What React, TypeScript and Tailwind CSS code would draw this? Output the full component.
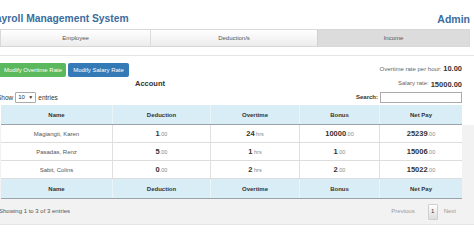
import React from "react";

const cols = "grid grid-cols-[112px_98px_89px_80px_82px]";

function Num({ v, unit }: { v: string; unit: string }) {
  return (
    <span className="text-[#333] leading-none">
      <span className="text-[7.5px] font-bold">{v}</span>
      <span className="text-[5.5px] text-[#888]">{unit}</span>
    </span>
  );
}

const rows = [
  { name: "Magiangit, Karen", d: "1", o: "24", b: "10000", n: "25239" },
  { name: "Pasadas, Renz", d: "5", o: "1", b: "1", n: "15006" },
  { name: "Sabit, Colins", d: "0", o: "2", b: "2", n: "15022" },
];

function HeaderRow() {
  const heads = ["Name", "Deduction", "Overtime", "Bonus", "Net Pay"];
  return (
    <div className={`${cols} h-[20px] bg-[#d9edf7] border-b border-[#9aa3a8]`}>
      {heads.map((h, i) => (
        <div
          key={h}
          className={`flex items-center justify-center text-[6px] leading-none font-bold text-[#333] ${i < 4 ? "border-r border-[#eaf4f9]" : ""}`}
        >
          {h}
        </div>
      ))}
    </div>
  );
}

const cell = "flex items-center justify-center text-[7.5px] leading-none";

export default function App() {
  return (
    <div className="w-[474px] h-[248px] bg-white overflow-hidden font-['Liberation_Sans',Arial,sans-serif]">
      {/* Title */}
      <div className="h-[29px] flex items-start justify-between pt-[13px] pr-[4px]">
        <div className="ml-[-11px] text-[10.3px] leading-[12px] font-bold text-[#3a6d9e]">
          Payroll Management System
        </div>
        <div className="text-[10.5px] leading-[12px] font-bold text-[#3a6d9e]">Admin</div>
      </div>

      {/* Tabs */}
      <div className="h-[18px] mr-[4px] flex border border-[#d8d8d8] bg-gradient-to-b from-white to-[#ececec] text-[6px] text-[#555]">
        <div className="w-[150px] flex items-center justify-center border-r border-[#dcdcdc]">Employee</div>
        <div className="w-[167px] flex items-center justify-center border-r border-[#d0d0d0]">Deduction/s</div>
        <div className="flex-1 flex items-center justify-center bg-[#dcdcdc]">Income</div>
      </div>

      {/* Panel */}
      <div className="mt-[8px] border-t border-[#e6e6e6]">
        {/* Row 1 */}
        <div className="h-[22px] pt-[7px] pr-[12px] flex items-start justify-between">
          <div className="flex gap-[2px]">
            <div className="h-[14px] w-[66px] flex items-center justify-center bg-[#5cb85c] text-white text-[6px] rounded-r-[2px]">
              Modify Overtime Rate
            </div>
            <div className="h-[14px] w-[61px] flex items-center justify-center bg-[#337ab7] text-white text-[6px] rounded-[2px]">
              Modify Salary Rate
            </div>
          </div>
          <div className="mt-[1px] text-[6px] leading-[10px] text-[#666]">
            Overtime rate per hour: <span className="text-[7.5px] font-bold text-[#333]">10.00</span>
          </div>
        </div>
        {/* Row 2 */}
        <div className="h-[12px] pr-[12px] flex items-center">
          <div className="w-[400px] flex justify-center ml-[-50px]">
            <div className="text-[7.5px] font-bold text-[#333]">Account</div>
          </div>
          <div className="flex-1 flex justify-end mt-[2px] text-[6px] text-[#666]">
            Salary rate: <span className="ml-[2px] text-[7.5px] font-bold text-[#333]">15000.00</span>
          </div>
        </div>
        {/* Row 3 */}
        <div className="h-[15px] pr-[12px] flex items-center justify-between">
          <div className="ml-[-3px] flex items-center gap-[2px] text-[6.5px] text-[#333]">
            <span>Show</span>
            <span className="h-[11px] w-[21px] flex items-center justify-between px-[2px] border border-[#aaa] rounded-[1px] bg-white text-[6px]">
              <span>10</span>
              <span className="text-[5px]">▼</span>
            </span>
            <span>entries</span>
          </div>
          <div className="flex items-center gap-[2px] text-[6px] font-bold text-[#333]">
            <span>Search:</span>
            <span className="h-[11px] w-[82px] border border-[#aaa] bg-white"></span>
          </div>
        </div>
        {/* Table header */}
        <div className="pl-[1px] w-[462px]">
          <HeaderRow />
        </div>
        {/* Gray body area */}
        <div className="bg-[#f2f2f2] border-b border-[#e4e4e4] pl-[1px]">
          <div className="w-[461px]">
            {rows.map((r) => (
              <div key={r.name} className={`${cols} h-[18px] bg-white border-b border-[#dddddd]`}>
                <div className="flex items-center justify-center text-[6px] leading-none text-[#555] border-r border-[#e0e0e0]">{r.name}</div>
                <div className={`${cell} border-r border-[#e0e0e0]`}><Num v={r.d} unit=".00" /></div>
                <div className={`${cell} border-r border-[#e0e0e0]`}><Num v={r.o} unit=" hrs" /></div>
                <div className={`${cell} border-r border-[#e0e0e0]`}><Num v={r.b} unit=".00" /></div>
                <div className={cell}><Num v={r.n} unit=".00" /></div>
              </div>
            ))}
            <HeaderRow />
          </div>
          <div className="h-[25px] pr-[18px] flex items-center justify-between">
            <div className="ml-[-2px] text-[6px] text-[#555]">Showing 1 to 3 of 3 entries</div>
            <div className="flex items-center text-[6px] text-[#999]">
              <span>Previous</span>
              <span className="ml-[13px] h-[16px] w-[10px] flex items-center justify-center border border-[#cfcfcf] rounded-[1px] bg-gradient-to-b from-white to-[#dcdcdc] text-[#333]">1</span>
              <span className="ml-[6px]">Next</span>
            </div>
          </div>
        </div>
      </div>
    </div>
  );
}
